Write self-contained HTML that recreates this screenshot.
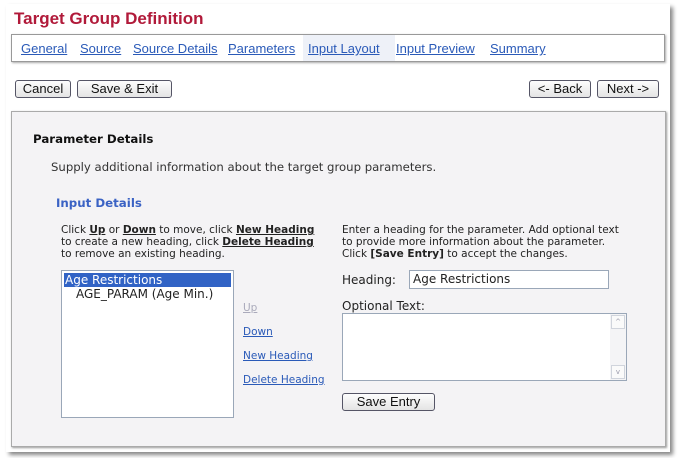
<!DOCTYPE html>
<html><head><meta charset="utf-8"><style>
*{margin:0;padding:0;box-sizing:border-box}
body{width:691px;height:458px;background:#fff;position:relative;overflow:hidden;font-family:"DejaVu Sans",Verdana,sans-serif;font-size:11px;color:#222}
.page{position:absolute;left:6px;top:4px;width:664px;height:448px;background:#fff;box-shadow:3px 3px 4px #888}
.a{position:absolute;white-space:nowrap}
.title{left:8px;top:8px;font-family:"Liberation Sans",sans-serif;font-weight:bold;font-size:17px;color:#b11a3a}
.nav{left:11px;top:34px;width:654px;height:28px;border:1px solid #999;box-shadow:1px 1px 2px #aaa;background:#fff}
.nav a{position:absolute;top:6px;font-family:"Liberation Sans",sans-serif;font-size:13px;color:#2a5ab8;text-decoration:underline}
.btn{position:absolute;height:18px;border:1px solid #556;border-radius:3px;background:linear-gradient(#fdfdfd,#e4e4e4);font-family:"Liberation Sans",sans-serif;font-size:13px;text-align:center;line-height:16px;color:#111}
.panel{left:11px;top:111px;width:655px;height:336px;background:#f4f3f5;border:1px solid #aaa;box-shadow:1px 1px 2px #999}
.lnk{color:#2a5ab8;text-decoration:underline}
</style></head><body>
<div class="page"></div>
<div class="a title" style="left:14px;top:9px">Target Group Definition</div>
<div class="a nav">
<div style="position:absolute;left:291px;top:0;width:92px;height:26px;background:#eef1f8"></div>
<a style="left:9px">General</a><a style="left:68px">Source</a><a style="left:121px">Source Details</a><a style="left:216px">Parameters</a><a style="left:296px">Input Layout</a><a style="left:384px">Input Preview</a><a style="left:478px">Summary</a>
</div>
<div class="btn" style="left:15px;top:80px;width:56px">Cancel</div>
<div class="btn" style="left:77px;top:80px;width:95px">Save &amp; Exit</div>
<div class="btn" style="left:529px;top:80px;width:62px">&lt;- Back</div>
<div class="btn" style="left:597px;top:80px;width:62px">Next -&gt;</div>
<div class="a panel"></div>
<div class="a" style="left:33px;top:132px;font-weight:bold;font-size:11.8px;color:#111">Parameter Details</div>
<div class="a" style="left:51px;top:160px;font-size:11.7px;color:#333">Supply additional information about the target group parameters.</div>
<div class="a" style="left:56px;top:196px;font-weight:bold;font-size:11.8px;color:#3a62c4">Input Details</div>
<div class="a" style="left:61px;top:224px;line-height:12px;font-size:10.5px;color:#222">Click <b><u>Up</u></b> or <b><u>Down</u></b> to move, click <b><u>New Heading</u></b><br>to create a new heading, click <b><u>Delete Heading</u></b><br>to remove an existing heading.</div>
<div class="a" style="left:61px;top:270px;width:173px;height:148px;background:#fff;border:1px solid #9aa7b8">
<div style="margin:2px 2px 0;background:#3163c5;color:#fff;font-size:12px;height:14px;line-height:14px;padding-left:1px">Age Restrictions</div>
<div style="padding-left:14px;font-size:12px;line-height:15px;color:#222">AGE_PARAM (Age Min.)</div>
</div>
<div class="a" style="left:243px;top:302px;color:#aab;text-decoration:underline;font-size:10.5px">Up</div>
<div class="a lnk" style="left:243px;top:326px;font-size:10.5px">Down</div>
<div class="a lnk" style="left:243px;top:350px;font-size:10.5px">New Heading</div>
<div class="a lnk" style="left:243px;top:374px;font-size:10.5px">Delete Heading</div>
<div class="a" style="left:342px;top:224px;line-height:12px;font-size:10.5px;color:#222">Enter a heading for the parameter. Add optional text<br>to provide more information about the parameter.<br>Click <b>[Save Entry]</b> to accept the changes.</div>
<div class="a" style="left:342px;top:273px;font-size:12px">Heading:</div>
<div class="a" style="left:409px;top:270px;width:200px;height:19px;background:#fff;border:1px solid #9aa7b8;font-size:12px;line-height:17px;padding-left:3px">Age Restrictions</div>
<div class="a" style="left:342px;top:299px;font-size:12px">Optional Text:</div>
<div class="a" style="left:342px;top:313px;width:285px;height:68px;background:#fff;border:1px solid #9aa7b8">
<div style="position:absolute;right:0;top:0;width:16px;height:66px;background:#f4f4f6"></div>
<div style="position:absolute;right:1px;top:1px;width:14px;height:14px;border:1px solid #d0d4dc;background:#fafafa;font-size:7px;color:#99a;text-align:center;line-height:12px">^</div>
<div style="position:absolute;right:1px;bottom:1px;width:14px;height:14px;border:1px solid #d0d4dc;background:#fafafa;font-size:7px;color:#99a;text-align:center;line-height:12px">v</div>
</div>
<div class="btn" style="left:342px;top:393px;width:93px">Save Entry</div>
</body></html>
